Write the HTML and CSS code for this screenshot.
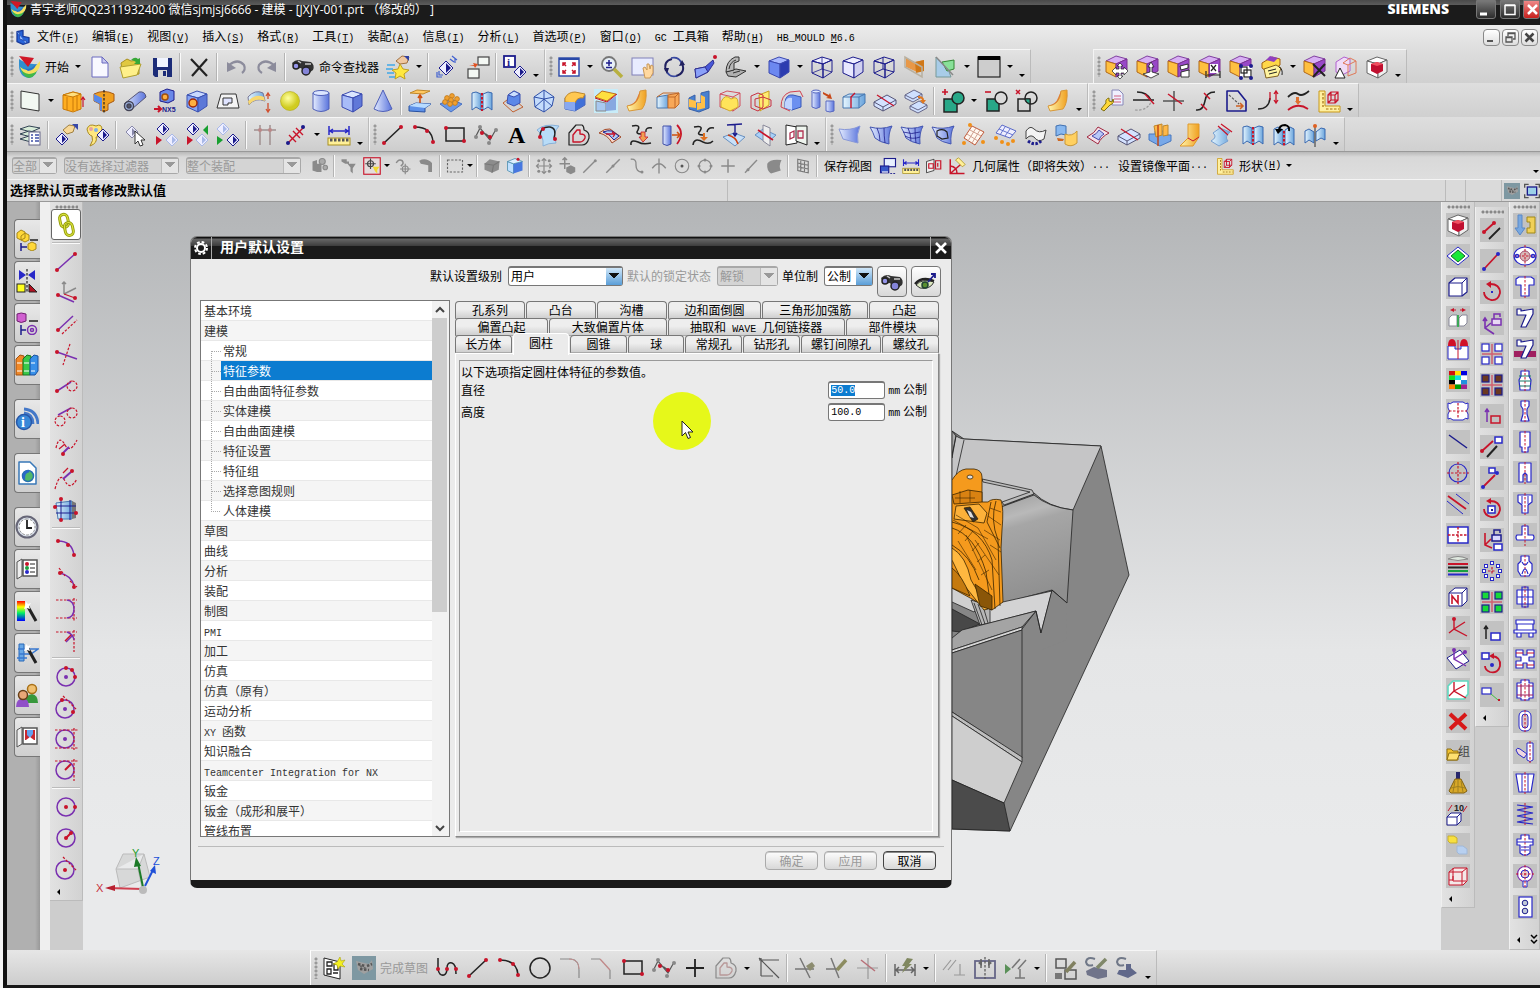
FILE: index.html
```html
<!DOCTYPE html>
<html lang="zh-CN">
<head>
    <meta charset="UTF-8">
    <meta name="viewport" content="width=device-width, initial-scale=1.0">
    <title>建模 - JXJY-001.prt</title>
    <link rel="stylesheet" href="styles.css">
</head>
<body>

<!-- Shared gradients for the icons -->
<svg class="defs" width="0" height="0">
    <defs>
        <linearGradient id="blue"><stop offset="0" stop-color="#e4ecff"/><stop offset="1" stop-color="#5a74dc"/></linearGradient>
        <linearGradient id="sky"><stop offset="0" stop-color="#e6f6ff"/><stop offset="1" stop-color="#6aa4dc"/></linearGradient>
        <linearGradient id="gold"><stop offset="0" stop-color="#fff7b0"/><stop offset="1" stop-color="#f0a020"/></linearGradient>
        <linearGradient id="gray" x2="0" y2="1"><stop offset="0" stop-color="#eee"/><stop offset="1" stop-color="#888"/></linearGradient>
        <linearGradient id="heat" x2="0" y2="1"><stop offset="0" stop-color="#f00"/><stop offset=".3" stop-color="#ff0"/><stop offset=".6" stop-color="#0e6"/><stop offset="1" stop-color="#00f"/></linearGradient>
        <linearGradient id="metal" x2=".2" y2="1"><stop offset="0" stop-color="#9d9d9d"/><stop offset=".22" stop-color="#b9b9b9"/><stop offset=".32" stop-color="#a6a6a6"/><stop offset="1" stop-color="#8f8f8f"/></linearGradient>
        <radialGradient id="ball" cx=".4" cy=".35"><stop offset="0" stop-color="#ffffa0"/><stop offset="1" stop-color="#d0cc20"/></radialGradient>
    </defs>
</svg>

<div class="app">

    <!-- Title bar -->
    <header class="titlebar">
        <svg class="logo" data-icon="start"></svg>
        <h1>青宇老师QQ2311932400 微信sjmjsj6666 - 建模 - [JXJY-001.prt （修改的） ]</h1>
        <span class="brand">SIEMENS</span>
        <button class="win" aria-label="minimize"><svg viewBox="0 0 20 19"><path d="M4 14h7" stroke="#fff" stroke-width="3"/></svg></button>
        <button class="win" aria-label="maximize"><svg viewBox="0 0 20 19"><path d="M5 5.500h10v9H5zM5 5h10" stroke="#fff" stroke-width="1.500" fill="none"/></svg></button>
        <button class="win close" aria-label="close"><svg viewBox="0 0 20 19"><path d="M5 5l9 9M14 5l-9 9" stroke="#fff" stroke-width="2.500"/></svg></button>
    </header>

    <!-- Menu -->
    <nav class="menubar">
        <span class="grip"></span>
        <svg class="menu-logo" data-icon="part"></svg>
        <a href="#">文件<i>(<u>F</u>)</i></a>
        <a href="#">编辑<i>(<u>E</u>)</i></a>
        <a href="#">视图<i>(<u>V</u>)</i></a>
        <a href="#">插入<i>(<u>S</u>)</i></a>
        <a href="#">格式<i>(<u>R</u>)</i></a>
        <a href="#">工具<i>(<u>T</u>)</i></a>
        <a href="#">装配<i>(<u>A</u>)</i></a>
        <a href="#">信息<i>(<u>I</u>)</i></a>
        <a href="#">分析<i>(<u>L</u>)</i></a>
        <a href="#">首选项<i>(<u>P</u>)</i></a>
        <a href="#">窗口<i>(<u>O</u>)</i></a>
        <a href="#"><i>GC </i>工具箱</a>
        <a href="#">帮助<i>(<u>H</u>)</i></a>
        <a href="#"><i>HB_MOULD <u>M</u>6.6</i></a>
        <span class="mdi">
            <button aria-label="minimize"><svg viewBox="0 0 17 17"><path d="M4 12h6" stroke="#555" stroke-width="2"/></svg></button>
            <button aria-label="restore"><svg viewBox="0 0 17 17"><path d="M4 8h6v5H4zM6 7V4h7v6h-2M4 8.500h6M6 4.500h7" stroke="#555" stroke-width="1.300" fill="none"/></svg></button>
            <button aria-label="close"><svg viewBox="0 0 17 17"><path d="M4.500 4.500l8 8M12.500 4.500l-8 8" stroke="#444" stroke-width="2.500"/></svg></button>
        </span>
    </nav>

    <!-- Toolbars -->
    <div class="toolrow">
        <div class="toolbar">
            <span class="grip"></span>
            <button class="tool text" data-icon="start">开始</button>
            <span class="tools" data-icons="v new open save | cut | undo redo |"></span>
            <button class="tool text" data-icon="binoc">命令查找器</button>
            <span class="tools" data-icons="wand v | orient layout | info ."></span>
        </div>
        <div class="toolbar">
            <span class="grip"></span>
            <span class="tools" data-icons="fit v zoom pan rotate persp clip v shaded v wire1 wire2 wire3 section section2 v window v ."></span>
        </div>
        <div class="toolbar apart">
            <span class="grip"></span>
            <span class="tools" data-icons="fmove fpull foffset fdim fpattern flabel v fdelete fghost redcube ."></span>
        </div>
    </div>
    <div class="toolrow">
        <div class="toolbar">
            <span class="grip"></span>
            <span class="tools" data-icons="plane v extrude revolve tube nx5 hole pad emboss sphere cyl block cone | raise studs sew draft gem blend chamfer flange join pocket bubble inter patch split trimbody slab slabs | unite v subtract intersect flange ."></span>
        </div>
        <div class="toolbar">
            <span class="grip"></span>
            <span class="tools" data-icons="wrench trimcurve trimcross scurve bound extend offsetcurve rulercube ."></span>
        </div>
    </div>
    <div class="toolrow">
        <div class="toolbar">
            <span class="grip"></span>
            <span class="tools" data-icons="layers | assign palette1 | pick add1 add2 add3 | gridlines measure v ruler ."></span>
        </div>
        <div class="toolbar">
            <span class="grip"></span>
            <span class="tools" data-icons="line arc rect spline lettera surfcurve offsetgray bridge joincurve wrapcyl joincurve2 project intersectsurf planes ."></span>
        </div>
        <div class="toolbar">
            <span class="grip"></span>
            <span class="tools" data-icons="surf1 surf2 surf3 surf4 netred netblue flagsheet extendsheet offsetsheet slab castle bootsheet foldsheet sew sewback sewpin ."></span>
        </div>
    </div>

    <!-- Selection bar -->
    <div class="selbar">
        <span class="combo off combo-s"><select aria-label="type" disabled><option>全部</option></select></span>
        <span class="combo off combo-m"><select aria-label="filter" disabled><option>没有选择过滤器</option></select></span>
        <span class="combo off combo-m"><select aria-label="scope" disabled><option>整个装配</option></select></span>
        <span class="tools" data-icons="gparts | gfilter snapbox v gturn ghook | marquee v | gcube bluecube | gmove gmove2 gline gseg gcurve gcross gcircle gquad gplus gslash gface | ggrid |"></span>
        <button class="plain">保存视图</button>
        <span class="tools" data-icons="saveview ruler planes2 angle"></span>
        <button class="plain">几何属性（即将失效）<i>...</i></button>
        <button class="plain">设置镜像平面<i>...</i></button>
        <button class="plain" data-icon="rulercube">形状<i>(<u>H</u>)</i></button>
        <span class="tools" data-icons="v"></span>
        <span class="corner"><span class="tools" data-icons="."></span></span>
    </div>

    <!-- Cue line -->
    <div class="status">
        <p class="cue">选择默认页或者修改默认值</p>
        <p class="msg"></p>
        <p class="cell"></p>
        <p class="cell cell-l"></p>
        <p class="cell icons"><svg data-icon="flag"></svg><svg data-icon="fullscreen"></svg></p>
    </div>

    <!-- Work area -->
    <main class="work">
        <aside class="resources">
            <button data-icon="assytree" aria-label="assembly"></button>
            <button data-icon="constraint" aria-label="constraints"></button>
            <button data-icon="parttree" aria-label="part"></button>
            <button data-icon="books" class="last" aria-label="library"></button>
            <button data-icon="web" class="last" aria-label="web"></button>
            <button data-icon="page" class="last" aria-label="page"></button>
            <button data-icon="clock" aria-label="history"></button>
            <button data-icon="materials" aria-label="materials"></button>
            <button data-icon="spectrum" aria-label="process"></button>
            <button data-icon="wizard" aria-label="wizard"></button>
            <button data-icon="people" aria-label="roles"></button>
            <button data-icon="scene" aria-label="scenes"></button>
        </aside>
        <aside class="dock left">
            <div class="toolcol">
                <span class="grip"></span>
                <span class="tools" data-icons="link | k1 k2 k3 k4 k5 k6 k7 k8 k9 | a1 a2 a3 a4 | c1 c2 c3 c4 | d1 d2 d3 <"></span>
            </div>
        </aside>

        <section class="graphics">
            <!-- Solid model -->
            <svg class="model" viewBox="952 425 180 410" width="180" height="410">
                <g stroke="#222" stroke-width=".8" stroke-linejoin="round">
                    <path fill="#868686" d="M952 431L964 439 1101 446 1129 575 1010 831 952 829z"/>
                    <path fill="#c5c5c6" d="M952 431Q956 438 964 439L1101 446 1073 510Q1048 507 1034 493L1004 506 952 520z"/>
                    <path fill="#aaa" d="M952 431L956 436 952 458z"/>
                    <path fill="none" d="M964 440L954 485M956 436L952 455"/>
                    <path fill="#bbb" d="M982 479L1032 490 1034 494 1004 505 1002 502 1030 492 983 482z"/>
                    <path fill="url(#metal)" d="M1001 507L1034 495Q1048 507 1073 510L1067 603 1052 590 1000 604z"/>
                    <path fill="#d3d3d4" d="M985 606L1052 591 1041 633 1036 611 990 623z"/>
                    <path fill="#868686" d="M1052 591L1067 603 1066 640 1041 650 1041 633z" stroke="none"/>
                    <path fill="none" d="M1067 603L1052 590 1041 633 1036 611 1022 629"/>
                    <path fill="#d0d0d0" d="M952 582L980 605 974 612 952 602z"/>
                    <path fill="#484848" d="M952 609L980 624 960 632 952 631z"/>
                    <path fill="#b6b6b6" d="M971 600L990 606 990 623 980 625z"/>
                    <path fill="none" d="M974 603l8 22M978 604l7 20M983 606l5 17"/>
                    <path fill="#a4a4a4" d="M952 638L962 630 1036 611 1022 627 952 650z"/>
                    <path fill="#d6d6d6" d="M952 650L1022 627V630L952 653z"/>
                    <path fill="#868686" d="M952 653L1022 630V758L952 712z"/>
                    <path fill="#bdbdbd" d="M952 712L1022 757V762L952 716z"/>
                    <path fill="#cecece" d="M952 716L1022 762 1004 803 952 780z"/>
                    <path fill="#4b4b4b" d="M952 780L1004 803 1010 831 952 829z"/>
                </g>
                <g stroke="#3a2400" stroke-width=".8" fill="#f59a1d">
                    <path d="M952 480Q958 470 966 469H974Q982 470 982 477V502H988Q992 498 1001 500Q1004 508 1002 530L1001 548 1003 602 992 610 952 588z"/>
                    <path d="M952 495L968 490 982 492V502L954 504z" fill="#d98212"/>
                    <path d="M956 506L979 504 987 513 984 523 954 519z" fill="#fcb13a"/>
                    <path d="M952 528Q975 535 986 572L991 609M952 522Q983 530 992 560L995 609M952 545Q970 555 979 580M996 501Q990 520 998 540L1000 606M991 502L987 522 1000 548" fill="none"/>
                    <path d="M952 548Q966 556 971 580L988 609 984 610 964 585 952 560z" fill="#ffb840"/>
                    <path d="M975 584L992 596V610L980 606z" fill="#8a5608"/>
                    <path d="M952 568Q962 575 970 596L952 588z" fill="#c47a10"/>
                    <path d="M958 534l8-9M965 541l8-10M972 551l7-8M977 562l8-7M981 575l8-5M955 498h20M960 491v12M970 490v12" fill="none" stroke-width=".6"/>
                    <path d="M953 520L988 539M956 515L978 528 996 560M990 508L1001 512M988 516L1001 525M984 530L1000 540M990 545L1001 552M975 540L999 575M966 535L992 590M958 541L976 570" fill="none" stroke-width=".6"/>
                    <path d="M964 508l6-1 8 12-5 3z" fill="#333"/>
                    <path d="M967 510l4 2 3 6-4-1z" fill="#ddd" stroke="none"/>
                    <ellipse cx="970" cy="477" rx="3" ry="2" fill="#ddd"/>
                </g>
            </svg>

            <!-- View triad -->
            <svg class="triad" viewBox="95 845 70 50" width="70" height="50">
                <path d="M123 853L144 853 150 876 120 887 116 868zM116 868H138L144 853M138 868L142 887" fill="#ccc" fill-opacity=".6" stroke="#bbb"/>
                <path d="M142 888L108 887" stroke="#d04050" stroke-width="2"/><path d="M105 887l10-3v6z" fill="#b82030"/>
                <path d="M143 886L138 862" stroke="#1c7a28" stroke-width="2"/><path d="M136 856l5 9-7 1z" fill="#1c7a28"/>
                <path d="M145 885L153 869" stroke="#2050d8" stroke-width="2"/><path d="M155 864l1 9-6-3z" fill="#2050d8"/>
                <circle cx="143" cy="889" r="4" fill="#bbb"/>
                <text x="96" y="891" fill="#c83040">X</text>
                <text x="132" y="856" fill="#28a030">Y</text>
                <text x="153" y="864" fill="#2050d8">Z</text>
            </svg>

            <!-- Customer defaults dialog -->
            <div class="dialog" role="dialog" aria-labelledby="dialog-title">
                <div class="dialog-title">
                    <svg viewBox="0 0 20 22" width="20" height="22"><circle cx="10" cy="11" r="6" fill="none" stroke="#fff" stroke-width="2" stroke-dasharray="2.700 2"/><circle cx="10" cy="11" r="4" fill="none" stroke="#fff" stroke-width="2"/></svg>
                    <h2 id="dialog-title">用户默认设置</h2>
                    <button aria-label="close"><svg viewBox="0 0 20 22" width="20" height="22"><path d="M5 6l10 10M15 6L5 16" stroke="#fff" stroke-width="2.600"/></svg></button>
                </div>

                <div class="levels">
                    <div class="pair">
                        <label for="level">默认设置级别</label>
                        <span class="combo combo-m"><select id="level"><option>用户</option></select></span>
                    </div>
                    <div class="pair off">
                        <label for="lock">默认的锁定状态</label>
                        <span class="combo off combo-s"><select id="lock" disabled><option>解锁</option></select></span>
                    </div>
                    <div class="pair">
                        <label for="unit">单位制</label>
                        <span class="combo combo-xs"><select id="unit"><option>公制</option></select></span>
                    </div>
                    <button class="square" data-icon="binoc" aria-label="find"></button>
                    <button class="square" data-icon="eye" aria-label="manage"></button>
                </div>

                <div class="content">
                    <div class="tree">
                        <ul>
                            <li>基本环境</li>
                            <li>建模</li>
                            <li class="child">常规</li>
                            <li class="child selected"><span>特征参数</span></li>
                            <li class="child">自由曲面特征参数</li>
                            <li class="child">实体建模</li>
                            <li class="child">自由曲面建模</li>
                            <li class="child">特征设置</li>
                            <li class="child">特征组</li>
                            <li class="child">选择意图规则</li>
                            <li class="child end">人体建模</li>
                            <li>草图</li>
                            <li>曲线</li>
                            <li>分析</li>
                            <li>装配</li>
                            <li>制图</li>
                            <li><i>PMI</i></li>
                            <li>加工</li>
                            <li>仿真</li>
                            <li>仿真（原有）</li>
                            <li>运动分析</li>
                            <li><i>XY </i>函数</li>
                            <li>知识融合</li>
                            <li><i>Teamcenter Integration for NX</i></li>
                            <li>钣金</li>
                            <li>钣金（成形和展平）</li>
                            <li>管线布置</li>
                        </ul>
                        <div class="scroll">
                            <svg viewBox="0 0 16 17"><path d="M4 11l4-4 4 4" fill="none" stroke="#444" stroke-width="2"/></svg>
                            <div class="thumb"></div>
                            <svg viewBox="0 0 16 17"><path d="M4 7l4 4 4-4" fill="none" stroke="#444" stroke-width="2"/></svg>
                        </div>
                    </div>

                    <div class="pages">
                        <div class="tabs">
                            <button><span>孔系列</span></button><button><span>凸台</span></button><button><span>沟槽</span></button><button><span>边和面倒圆</span></button><button><span>三角形加强筋</span></button><button><span>凸起</span></button>
                        </div>
                        <div class="tabs">
                            <button><span>偏置凸起</span></button><button><span>大致偏置片体</span></button><button><span>抽取和<i> WAVE </i>几何链接器</span></button><button><span>部件模块</span></button>
                        </div>
                        <div class="tabs">
                            <button><span>长方体</span></button><button class="active"><span>圆柱</span></button><button><span>圆锥</span></button><button><span>球</span></button><button><span>常规孔</span></button><button><span>钻形孔</span></button><button><span>螺钉间隙孔</span></button><button><span>螺纹孔</span></button>
                        </div>
                        <div class="panel">
                            <div class="panel-inner">
                                <p>以下选项指定圆柱体特征的参数值。</p>
                                <div class="field">
                                    <label for="diameter">直径</label>
                                    <input id="diameter" type="text" value="50.0">
                                    <span><i>mm</i> 公制</span>
                                </div>
                                <div class="field">
                                    <label for="height">高度</label>
                                    <input id="height" type="text" value="100.0">
                                    <span><i>mm</i> 公制</span>
                                </div>
                            </div>
                        </div>
                    </div>
                </div>

                <div class="actions">
                    <button disabled>确定</button>
                    <button disabled>应用</button>
                    <button>取消</button>
                </div>
            </div>

            <!-- Click highlight and pointer -->
            <div class="spot">
                <svg viewBox="0 0 14 20" width="14" height="20"><path d="M1 1v15l3.500-3.500L7 18.500l2.500-1L7 12h5z" fill="#fff" stroke="#222"/></svg>
            </div>
        </section>

        <aside class="dock right">
            <div class="toolcol tiles">
                <span class="grip"></span>
                <span class="tools" data-icons="redcube diamond wbox splitbox mold swatches sheet bline target lines3 rectcross rainbow nbox axis axisplane axisbox bigx folder broom ten blobs redbox <"></span>
            </div>
        </aside>
        <aside class="dock right lower">
            <div class="toolcol tiles">
                <span class="grip"></span>
                <span class="tools" data-icons="parl seg rotr axlock four fourb moverect parl2 seg2 rot2 axlock2 ringsq fourg moverect2 rot3 linkr <"></span>
            </div>
        </aside>
        <aside class="dock right">
            <div class="toolcol tiles full">
                <span class="grip"></span>
                <span class="tools" data-icons="screw locring tee seven seven2 m1 m2 m3 m4 m5 m6 m7 m8 m9 m10 m11 m12 m13 m14 m15 m16 m17 m18"></span>
                <span class="more"><span class="tools" data-icons="< »"></span></span>
            </div>
        </aside>
    </main>

    <!-- Sketch toolbar -->
    <footer class="sketchbar">
        <div class="toolbar">
            <span class="grip"></span>
            <span class="tools" data-icons="sketch"></span>
            <button class="tool text" data-icon="flag" disabled>完成草图</button>
            <span class="tools" data-icons="profile line arc3 circle filletg chamferg rect spline plus offsetg v quickg | ext1 ext2 ext3 | dimg v | perpg consg playg v | edit1 edit2 edit3 ."></span>
        </div>
    </footer>
</div>

<script src="icons.js"></script>
</body>
</html>
```

FILE: styles.css
```css
* {
    box-sizing: border-box;
}

body {
    margin: 0;
    padding-left: 3px;
    background: #f4f4f4;
    color: #000;
    font-family: "Noto Sans CJK SC", sans-serif;
    font-size: 12px;
    line-height: 16px;
}

h1, h2, p, ul {
    margin: 0;
    padding: 0;
    font-size: 12px;
}

/* half-width latin text */
i {
    font-family: "Liberation Mono", monospace;
    font-size: 10px;
    font-style: normal;
    white-space: pre;
}

button, input, select {
    margin: 0;
    padding: 0;
    border: none;
    background: none;
    color: inherit;
    font: inherit;
}

.defs {
    position: absolute;
}

.app {
    display: flex;
    flex-direction: column;
    height: 100vh;
    border-left: 4px solid #111;
    border-bottom: 3px solid #181818;
    background: #d6d6d6;
    overflow: hidden;
}

/* Title bar */
.titlebar {
    display: flex;
    align-items: flex-start;
    height: 25px;
    flex-shrink: 0;
    background: linear-gradient(#4a4a4a, #5c5c5c 5px, #1b1b1b 5px);
    color: #fff;
}

.titlebar .logo {
    width: 18px;
    height: 18px;
    margin: 0 3px 0 2px;
}

.titlebar h1 {
    flex: 1;
    font-family: "Open Sans", "Noto Sans CJK SC", sans-serif;
    font-weight: 400;
    line-height: 19px;
    white-space: pre;
}

.brand {
    margin-right: 23px;
    font-family: "Open Sans", sans-serif;
    font-weight: 800;
    font-size: 14px;
    line-height: 18px;
}

.win {
    width: 20px;
    height: 19px;
    margin-left: 4px;
    border: 1px solid #777;
    border-radius: 0 0 3px 3px;
    background: linear-gradient(#777, #2c2c2c);
}

.win.close {
    width: 17px;
    margin-left: 3px;
    background: linear-gradient(#e88, #c8201c);
    overflow: hidden;
}

.win svg {
    display: block;
    width: 20px;
    height: 19px;
    margin: -1px;
}

/* Menu bar */
.menubar {
    display: flex;
    align-items: center;
    height: 24px;
    flex-shrink: 0;
    background: linear-gradient(#ececec, #dedede);
}

.menubar a {
    margin-right: 13px;
    color: #000;
    text-decoration: none;
    white-space: nowrap;
}

.menu-logo {
    width: 16px;
    height: 16px;
    margin: 0 6px 0 1px;
}

.mdi {
    display: flex;
    gap: 2px;
    margin-left: auto;
    margin-right: 2px;
}

.mdi button {
    width: 17px;
    height: 17px;
    border: 1px solid #888;
    border-radius: 4px;
    background: linear-gradient(#fff, #ddd);
}

.mdi svg {
    display: block;
    margin: -1px;
    width: 17px;
}

/* Toolbars */
.grip {
    width: 7px;
    align-self: stretch;
    margin: 6px 0;
    flex-shrink: 0;
    background: radial-gradient(circle, #999 1px, transparent 2px) 3px 0 / 4px 4px repeat-y;
}

.toolrow {
    display: flex;
    height: 34px;
    flex-shrink: 0;
    background: linear-gradient(#dedede, #d0d0d0);
}

.toolbar {
    display: flex;
    align-items: center;
    padding-right: 2px;
    border-top: 1px solid #f6f6f6;
    border-right: 1px solid #bbb;
    background: linear-gradient(#e3e3e3, #cdcdcd);
}

.toolbar + .toolbar {
    border-left: 1px solid #f4f4f4;
}

.apart {
    margin-left: 62px;
}

.tools {
    display: contents;
}

.tool {
    display: flex;
    align-items: center;
    justify-content: center;
    width: 31px;
    height: 31px;
    flex-shrink: 0;
}

.tool svg {
    width: 24px;
    height: 24px;
    flex-shrink: 0;
    overflow: visible;
}

.tool.text {
    width: auto;
    gap: 4px;
    padding: 0 3px;
}

.tool:disabled {
    color: #999;
}

.sep {
    width: 2px;
    height: 28px;
    margin: 0 2px;
    flex-shrink: 0;
    border-left: 1px solid #b4b4b4;
    background: #fafafa;
}

.caret {
    display: flex;
    justify-content: center;
    width: 12px;
    flex-shrink: 0;
}

.caret::after {
    content: "";
    border: 3px solid transparent;
    border-top-color: #000;
    border-bottom: none;
}

.caret.low {
    align-self: flex-end;
    padding-bottom: 6px;
}

/* Selection bar */
.selbar {
    display: flex;
    align-items: center;
    height: 28px;
    flex-shrink: 0;
    padding-left: 5px;
    border-top: 1px solid #999;
    background: linear-gradient(#b8b8b8, #d8d8d8 5px, #dedede);
}

.selbar .combo {
    margin-right: 7px;
}

.selbar .tool {
    width: 23px;
    height: 24px;
}

.selbar .tool svg, .plain svg {
    width: 18px;
    height: 18px;
}

.selbar .sep {
    height: 22px;
}

.selbar .caret {
    width: 8px;
}

.plain {
    display: flex;
    align-items: center;
    margin: 0 4px;
    white-space: nowrap;
}

.plain svg {
    margin-right: 5px;
}

.corner {
    display: flex;
    margin-left: auto;
    align-self: flex-end;
}

/* Drop-downs */
.combo {
    position: relative;
    display: block;
    height: 20px;
    border: 1px solid #777;
    border-top-width: 2px;
    border-radius: 3px;
    background: #fff;
}

.combo select {
    display: block;
    width: 100%;
    height: 16px;
    padding-left: 2px;
    appearance: none;
    line-height: 16px;
    opacity: 1;
}

.combo::after {
    content: "";
    position: absolute;
    top: 0;
    right: 0;
    bottom: 0;
    width: 16px;
    background:
        conic-gradient(from -45deg at 50% 80%, #111 90deg, transparent 0) center 5px / 12px 7px no-repeat,
        linear-gradient(#cfe6f8, #5a9ed8);
    pointer-events: none;
}

.combo.off {
    border-color: #a8a8a8;
    background: #d4d4d4;
    color: #999;
}

.combo.off::after {
    background:
        conic-gradient(from -45deg at 50% 80%, #999 90deg, transparent 0) center 5px / 12px 7px no-repeat,
        #e4e4e4;
    border-left: 1px solid #bbb;
}

.combo-xs { width: 49px; }
.combo-s { width: 61px; }
.combo-m { width: 115px; }

.selbar .combo { height: 17px; }
.selbar .combo select { height: 14px; line-height: 14px; padding: 0; }
.selbar .combo-s { width: 45px; }
.selbar .combo::after { background-position: center 3px, 0 0; }

/* Cue line */
.status {
    display: flex;
    height: 23px;
    flex-shrink: 0;
    border-top: 1px solid #f4f4f4;
    border-bottom: 1px solid #999;
    background: #dadada;
}

.status p {
    border-right: 1px solid #bbb;
    line-height: 20px;
}

.status .cue {
    flex: 1;
    padding-left: 3px;
    font-size: 13px;
    font-weight: 700;
}

.msg {
    flex: 1;
}

.cell { width: 20px; }
.cell-l { width: 36px; }

.status .icons {
    display: flex;
    align-items: center;
    justify-content: space-between;
    width: 38px;
    padding-left: 2px;
    border: none;
}

.icons svg {
    width: 16px;
    height: 16px;
}

/* Work area */
.work {
    display: flex;
    flex: 1;
    min-height: 0;
}

.resources {
    display: flex;
    flex-direction: column;
    align-items: flex-end;
    gap: 2px;
    width: 43px;
    flex-shrink: 0;
    padding-top: 17px;
    border-right: 10px solid #efefef;
    background: linear-gradient(90deg, #b0b0b0 85%, #999);
}

.resources button {
    width: 26px;
    height: 40px;
    border: 1px solid #777;
    border-right: none;
    border-radius: 4px 0 0 4px;
    background: linear-gradient(#e8e8e8, #cfcfcf);
}

.resources .last {
    margin-bottom: 12px;
}

.resources svg {
    display: block;
    width: 24px;
    height: 24px;
}

.dock {
    flex-shrink: 0;
    width: 34px;
    background: #cdcdcd;
}

.dock.left {
    width: 33px;
}

.dock.right:last-child {
    width: 31px;
}

.dock.lower {
    padding-top: 5px;
}

.toolcol {
    display: flex;
    flex-direction: column;
    align-items: center;
    border: 1px solid #bbb;
    border-width: 0 1px 1px 0;
    background: linear-gradient(90deg, #e2e2e2, #d2d2d2);
}

.tiles {
    border-left: 1px solid #f0f0f0;
}

.toolcol .grip {
    width: 23px;
    height: 7px;
    align-self: center;
    margin: 0;
    background: radial-gradient(circle, #888 1px, transparent 2px) 0 3px / 4px 4px repeat-x;
}

.toolcol .sep {
    width: 28px;
    height: 2px;
    margin: 2px 0;
    border: none;
    border-top: 1px solid #bbb;
}

.tiles .tool svg {
    background: #c2c2c2;
}

.tool.on {
    width: 30px;
    border: 1px solid #666;
    border-radius: 3px;
    background: #fff;
}

.back {
    align-self: flex-start;
    height: 14px;
    width: 12px;
    margin: 1px 0;
}

.back::after {
    content: "";
    display: block;
    width: 3px;
    margin-left: 4px;
    border: 3px solid transparent;
    border-right-color: #000;
    border-left: none;
}

.full {
    height: 100%;
}

.more {
    display: flex;
    align-self: stretch;
    justify-content: space-between;
    margin-top: auto;
}

.more svg {
    width: 10px;
    height: 14px;
}

/* Graphics window */
.graphics {
    position: relative;
    flex: 1;
    background: linear-gradient(#b3b5b7, #e5e6e7 60%, #e9eaeb 85%);
    overflow: hidden;
}

.model {
    position: absolute;
    left: 869px;
    top: 223px;
}

.triad {
    position: absolute;
    left: 12px;
    bottom: 54px;
    font-family: "Liberation Sans", sans-serif;
    font-size: 11px;
}

.spot {
    position: absolute;
    left: 570px;
    top: 190px;
    width: 58px;
    height: 58px;
    padding: 28px 0 0 28px;
    border-radius: 50%;
    background: #e6f81a;
}

/* Dialog */
.dialog {
    position: absolute;
    left: 107px;
    top: 34px;
    display: flex;
    flex-direction: column;
    width: 762px;
    height: 652px;
    border: 1px solid #777;
    border-bottom: 8px solid #1a1a1a;
    border-radius: 7px;
    background: #ebebeb;
    overflow: hidden;
}

.dialog-title {
    display: flex;
    height: 22px;
    flex-shrink: 0;
    background: linear-gradient(#111 1px, #666 2px, #3c3c3c 9px, #1a1a1a 9px);
    color: #fff;
}

.dialog-title h2 {
    flex: 1;
    padding-left: 8px;
    border-left: 1px solid #aaa;
    font-size: 14px;
    line-height: 18px;
}

.dialog-title button {
    width: 21px;
    border-left: 1px solid #aaa;
}

.levels {
    display: flex;
    justify-content: flex-end;
    gap: 4px;
    height: 41px;
    flex-shrink: 0;
    padding: 7px 10px 0 0;
}

.pair {
    display: flex;
    gap: 6px;
    height: 20px;
    line-height: 20px;
}

.pair.off {
    color: #999;
}

.square {
    width: 30px;
    height: 31px;
    border: 1px solid #777;
    border-radius: 4px;
    background: linear-gradient(#fff, #d8d8d8);
}

.square svg {
    display: block;
    width: 24px;
    height: 24px;
    margin: auto;
}

.content {
    display: flex;
    flex: 1;
    gap: 5px;
    min-height: 0;
    padding: 0 12px 0 9px;
}

/* Tree */
.tree {
    display: flex;
    width: 250px;
    border: 1px solid #777;
    background: #fff;
    overflow: hidden;
}

.tree ul {
    flex: 1;
    list-style: none;
}

.tree li {
    position: relative;
    height: 20px;
    padding-left: 3px;
    border-bottom: 1px solid #e8e8e8;
    color: #333;
    line-height: 20px;
}

.tree li:nth-child(even) {
    background: #f5f5f5;
}

.tree .child {
    padding-left: 22px;
}

.tree .child::before {
    content: "";
    position: absolute;
    z-index: 1;
    left: 10px;
    top: 10px;
    width: 9px;
    height: 20px;
    border: 1px dotted #aaa;
    border-width: 1px 0 0 1px;
}

.tree .end::before {
    border-left: none;
}

.tree .selected span {
    display: block;
    height: 19px;
    margin-left: -2px;
    padding-left: 2px;
    background: #0c7cd0;
    color: #fff;
}

.scroll {
    display: flex;
    flex-direction: column;
    width: 17px;
    background: #f2f2f2;
}

.scroll svg {
    width: 16px;
    height: 17px;
}

.thumb {
    width: 15px;
    height: 55%;
    margin-bottom: auto;
    background: #cdcdcd;
}

/* Tabs */
.pages {
    display: flex;
    flex: 1;
    flex-direction: column;
    padding-top: 1px;
}

.tabs {
    display: flex;
    gap: 1px;
    height: 17px;
    flex-shrink: 0;
}

.tabs button {
    flex: 1 1 auto;
    height: 18px;
    border: 1px solid #777;
    border-bottom-color: #aaa;
    border-radius: 4px 4px 0 0;
    background: linear-gradient(#eee 45%, #cfcfcf);
    line-height: 16px;
    white-space: nowrap;
}

.tabs span {
    display: inline-block;
    min-width: 36px;
}

.tabs .active {
    z-index: 1;
    height: 22px;
    margin-top: -2px;
    padding-bottom: 3px;
    border-color: #fff;
    border-bottom: none;
    background: #ebebeb;
}

.panel {
    flex: 1;
    margin-top: 1px;
    padding: 6px 5px 4px 3px;
    border: 1px solid #888;
    border-top-color: #fff;
    border-left-color: #fff;
    box-shadow: 1px 1px 1px #aaa;
}

.panel-inner {
    height: 100%;
    padding: 4px 5px 0 1px;
    border: 1px solid #999;
    border-right-color: #fff;
    border-bottom-color: #fff;
}

.panel-inner p {
    line-height: 14px;
}

.field {
    display: flex;
    align-items: center;
    height: 22px;
}

.field label {
    flex: 1;
}

.field input {
    width: 57px;
    height: 18px;
    margin-right: 3px;
    padding-left: 2px;
    border: 1px solid #777;
    border-top-width: 2px;
    border-radius: 3px;
    background: #fff;
    font-family: "Liberation Mono", monospace;
    font-size: 10px;
}

.field input::selection {
    background: #0c7cd0;
    color: #fff;
}

.field input:focus {
    outline: none;
}

.actions {
    display: flex;
    justify-content: flex-end;
    gap: 6px;
    height: 34px;
    margin: 9px 7px 0;
    padding: 4px 8px 0;
    border-top: 1px solid #bbb;
}

.actions button {
    width: 53px;
    height: 19px;
    border: 1px solid #444;
    border-radius: 4px;
    background: linear-gradient(#fdfdfd, #d8d8d8);
    box-shadow: inset 0 1px #888;
    line-height: 17px;
}

.actions button:disabled {
    border-color: #aaa;
    box-shadow: inset 0 1px #ccc;
    color: #999;
}

/* Sketch toolbar */
.sketchbar {
    display: flex;
    height: 35px;
    flex-shrink: 0;
    padding-left: 303px;
    background: linear-gradient(#e6e6e6, #cdcdcd);
}

.sketchbar .toolbar {
    border-left: 1px solid #fff;
}
```

FILE: icons.js
```js
// Drawing helpers, every icon sits in a 24 x 24 box
const R = '#c8142a', N = '#1c1c8c', B = '#2828c8', K = '#222', G = '#8a8a8a', O = '#f09018', V = '#7a30b0';

const ln = (d, c = K, w = 1.5) => `<path d="${d}" fill="none" stroke="${c}" stroke-width="${w}"/>`;
const fl = (d, f, c = 'none', w = 1) => `<path d="${d}" fill="${f}" stroke="${c}" stroke-width="${w}" stroke-linejoin="round"/>`;
const ds = (d, c = R, w = 1.2) => `<path d="${d}" fill="none" stroke="${c}" stroke-width="${w}" stroke-dasharray="2.5 1.5"/>`;
const ci = (x, y, r, c = K, f = 'none', w = 1.5) => `<circle cx="${x}" cy="${y}" r="${r}" stroke="${c}" fill="${f}" stroke-width="${w}"/>`;
const bx = (x, y, w, h, c = K, f = 'none', s = 1.5) => `<rect x="${x}" y="${y}" width="${w}" height="${h}" stroke="${c}" fill="${f}" stroke-width="${s}"/>`;
const dots = (c, ...pts) => pts.map(p => `<circle cx="${p.split(',')[0]}" cy="${p.split(',')[1]}" r="2" fill="${c}"/>`).join('');
const tx = (x, y, s, t, c = K, f = 'Liberation Sans') => `<text x="${x}" y="${y}" font-size="${s}" font-weight="bold" font-family="${f}" fill="${c}">${t}</text>`;
const cube = (top, left, right, c = N) => fl('M2 6L12 2 22 5 13 9z', top, c) + fl('M2 6L13 9V23L2 18z', left, c) + fl('M13 9L22 5V17L13 23z', right, c);
const gem = (x, y, f = N, s = 6) => fl(`M${x - s} ${y}L${x} ${y - s} ${x + s} ${y} ${x} ${y + s}z`, '#eef', f) + fl(`M${x} ${y - s + 2}L${x + s - 2} ${y} ${x} ${y + s - 2}z`, f);
const sheet = (f, c = '#4456b0') => fl('M1 4Q12 7 23 3Q19 10 20 21Q10 19 6 15Q4 9 1 4z', f, c);
const face = fl('M1 6L11 1 22 4 11 9z', '#d8b0f4', '#8040a0') + fl('M1 6L11 9V22L1 17z', '#ffc040', '#b06818') + fl('M11 9L22 4V16L11 22z', '#9848c8', '#7a3090');
const part = d => fl(d, '#fff', B, 1.2) + ds('M12 1V23', R, 1);
const quad = (f, c, s) => [[2, 2], [15, 2], [2, 15], [15, 15]].map(p => bx(p[0], p[1], 7, 7, c, f, s)).join('') + ln('M12 2V22M2 12H22', '#d06070');
const slabAt = (x, y) => fl(`M${x} ${y + 5}l9-5 8 4v3l-9 5-8-4z`, '#cfe0ff', '#668') + ln(`M${x} ${y + 5}l8 4 9-5`, '#668', 1);

const icons = {
    // application
    start: fl('M2 4Q10 10 22 9Q20 22 12 23Q2 22 2 10z', '#2f8fd0') + fl('M4 12Q10 21 21 10Q20 22 12 23Q4 21 4 12z', '#42b848') + fl('M3 12Q12 20 23 6Q24 18 12 19Q5 18 3 12z', '#f4e060') + fl('M6 12Q12 17 19 9Q18 15 11 16z', '#2a70c8') + fl('M2 1L17 3 11 12z', '#d01828'),
    part: fl('M3 4L12 2V11L21 13V20L12 23 3 19z', '#2864d8', '#1a3c9c', 2) + fl('M3 4L7 6V15L17 18V22', '#a8c8ff', '#1a3c9c'),
    new: fl('M4 2H14L20 8V22H4z', '#f8f8ff', '#6a6ac0') + fl('M14 2V8H20z', '#c8c8f0', '#6a6ac0'),
    open: fl('M2 8L8 4 12 6 20 5V19L4 22z', '#e0c840', '#a89020') + fl('M1 12L22 9 18 20 4 23z', '#fff08a', '#b0a030') + fl('M12 5Q16 1 19 4L21 3V9H15L17 7Q14 5 12 5z', '#38a838'),
    save: fl('M3 3H22V22H5L3 20z', '#1c2c78') + bx(7, 3, 11, 9, 'none', '#f0f4ff') + bx(8, 15, 9, 7, 'none', '#d8d8d8') + bx(13, 16, 3, 5, 'none', '#1c2c78'),
    cut: ln('M4 4L20 21M20 4L5 21', K, 2.2),
    undo: ln('M5 10Q14 3 20 10Q22 15 18 18', '#8c8c9c', 2.2) + fl('M3 7V17L12 13z', '#8c8c9c'),
    redo: ln('M19 10Q10 3 4 10Q2 15 7 18', '#8c8c9c', 2.2) + fl('M21 7V17L12 13z', '#8c8c9c'),
    binoc: fl('M1 8Q6 3 11 6L20 7Q24 10 22 15L15 20 10 13 4 14z', '#333') + ci(5, 11, 3, '#222', '#9494e8') + ci(15, 16, 4, '#222', '#8484d8') + ln('M7 6L10 8M14 9L20 9', '#ccc'),
    wand: fl('M10 6L16 1 23 2 21 8 14 9z', '#f0c8a0', '#a07040') + fl('M18 1h5v5z', '#3040a0') + fl('M14 9l3 5 6 1-5 4 1 5-5-3-5 3 1-6-4-3 6-1z', '#ffe840', '#c0a020') + ln('M1 10H9M0 14H7M1 18H8M3 22H9', '#40a8e8'),
    orient: gem(11, 13, N, 7) + ln('M15 4l4 3M17 1l5 4M20 8V3M2 17v5h5M4 16v4h4', '#4060d0', 1.2),
    layout: bx(12, 2, 11, 8, '#444', '#f4f8f4', 1.2) + bx(2, 14, 11, 9, '#444', '#f4f8f4', 1.2) + fl('M3 11l5-1-1-2 5 1-3 4-1-2z', '#e05020'),
    info: bx(1, 1, 11, 11, N, '#fff', 1.8) + tx(4, 11, 11, 'i', N, 'Liberation Serif') + gem(17, 17),
    fit: bx(2, 3, 20, 18, '#2848a8', '#fff', 1.4) + fl('M2 3H22V5H2z', '#2848a8') + ln('M6 8l3 3M6 11V8h3M18 8l-3 3M18 11V8h-3M6 18l3-3M6 15v3h3M18 18l-3-3M18 15v3h-3', R),
    zoom: ci(9, 9, 7, '#777', '#e8f0f8', 1.8) + ln('M14 14L22 22', '#b8b040', 3.5) + ln('M9 5V11M6 8H12M6 12.500H12', N),
    pan: bx(1, 3, 21, 17, '#8080b8', '#e8ecff', 1) + fl('M12 13l2-1 2 3V9l2 0 1 5 1-4 2 1 0 7-3 5h-5z', '#ffd8a0', '#c89858'),
    rotate: ln('M4 16Q1 6 10 4M20 8Q24 18 14 21', '#202060', 2) + ln('M9 3Q18 1 20 10M15 21Q6 23 4 14', '#3848a0', 1.6) + fl('M2 13l5 0-2 6zM17 11l6-1-3-5z', '#202060'),
    persp: fl('M2 14L12 12 20 5 21 8 15 17 3 23z', '#4858d8', '#303090') + fl('M2 14L12 12 15 17 3 23z', '#8aa0f8', '#303090') + dots(R, '22,2'),
    clip: fl('M2 17L12 14 22 16 12 22 4 21z', '#b0b0b0', '#333') + fl('M2 17Q2 6 11 2L15 2V6L10 8V15z', '#b8b8b8', '#333') + fl('M5 14Q6 7 12 5M9 18l7-2', 'none', '#333'),
    shaded: cube('#a8b8ff', '#6c88f0', '#2c3cb0', '#3a48b0'),
    wire1: cube('#eef', 'none', 'none') + ln('M2 18L12 14 22 17M12 14V2', N, .8),
    wire2: cube('#eef', '#e8e8ff', '#d0d0f0'),
    wire3: cube('none', 'none', 'none') + ln('M2 18L11 14 22 17M11 14V2', N, 1),
    section: fl('M3 3L12 7 21 5V16L14 17 3 12z', '#e89848') + fl('M12 7L21 5V16L13 18z', '#d07818') + ln('M2 2V12L19 22V12z', '#b8b0a0'),
    section2: fl('M2 2V22L17 22 14 14z', '#a8cce8', '#799') + fl('M8 7L20 5 20 14 13 16z', '#88e098', '#383') + ln('M2 2L19 20', '#888'),
    window: bx(1, 2, 22, 20, K, '#cdcdcd', 1.2) + fl('M1 1H23V5H1z', '#000'),
    fmove: face + fl('M15 8l3 3h-2v3h3v-2l4 4-4 4v-2h-3v3h2l-3 3-3-3h2v-3h-3v2l-4-4 4-4v2h3v-3h-2z', '#fff', K, .7),
    fpull: face + fl('M15 7l3 5h-2v5l7 2-8 4-8-4 7-2v-5h-2z', '#fff', K, .8),
    foffset: face + fl('M13 11l8-2v4l-7 2zM14 17l8-2v7h-8z', '#fff', K, .9),
    fdim: face + bx(12, 9, 8, 9, 'none', '#fff') + ln('M13 10l5 6M18 10l-5 6M8 16v7M22 16v7M9 20h13', K, 1.2),
    fpattern: face + bx(11, 11, 12, 12, 'none', '#fff') + bx(12, 12, 6, 6, K, 'none', 1.2) + bx(15, 15, 7, 7, K, 'none', 1.2) + dots(N, '12,11', '22,11', '12,23', '22,23'),
    flabel: fl('M2 8L12 2 20 4 20 10 9 18 2 13z', '#ffd848', '#a06010') + fl('M10 1L18 3 14 7 6 5z', '#9040c0') + fl('M4 14L16 10 21 13 18 21 6 23z', '#fff4a0', '#806020') + ln('M8 16l8-2M9 19l8-2M19 12q4 2 3 8', K, 1),
    fdelete: face + ln('M10 9L22 21M22 9L10 22', K, 2),
    fghost: fl('M2 7L10 2 16 4V16L8 20 2 17z', '#f0dcf8', '#b060d0') + fl('M9 8L16 3 22 6V18L14 21V10L9 8M14 10L22 6', 'none', '#e07858') + fl('M6 13L11 23H1z', '#fff', K),
    redcube: cube('#fff', '#fff', '#eee', '#666') + fl('M6 9L12 7 18 9V16L12 19 6 16z', '#c01030') + fl('M6 9L12 7 18 9 12 11z', '#f05060'),

    // features
    plane: fl('M3 2L21 5V22L3 19z', '#f2f8f2', '#333'),
    extrude: fl('M2 6L12 3 20 5V20L12 23 2 20z', '#ffae20', '#c87808') + fl('M2 6L12 3 20 5 12 8z', '#ffe080', '#c87808') + ln('M6 8V21M12 8V22M16 7V21', '#c87808', 1) + ln('M22 18V9M20 11l2-3 2 3', R, 1.2),
    revolve: fl('M2 5Q12 0 22 5V12L16 15V21Q12 24 8 21V15L2 12z', '#f0a020', '#a85810') + fl('M2 5L10 9V22L8 21V15L2 12z', '#5888e8') + ds('M12 1V24', K),
    tube: fl('M1 15L16 3Q22 2 23 8L9 20z', 'url(#blue)', '#557') + ci(6, 17, 4.500, '#445', '#a8c0f0') + ci(6, 17, 2, '#445', '#556'),
    nx5: fl('M6 3L13 0 20 2V11L14 14 6 12z', '#6a88e8', N) + ci(11, 8, 3, '#a05010', '#ffb040') + tx(8, 23, 7, 'NX5', N) + ln('M0 20H7M4 17l3 3-3 3', R, 2),
    hole: cube('#c8d8ff', '#86a4f4', '#5c78d8', '#3a50b0') + ci(8, 14, 4, '#a02808', '#ffb040'),
    pad: fl('M5 5H20L23 19H1z', '#f4f4f4', '#333') + fl('M7 13V9H16V14H12V16H7z', '#e0e4ff', '#333'),
    emboss: fl('M1 8Q8 0 16 4L18 12Q8 8 2 16z', 'url(#sky)', '#779') + fl('M1 12Q9 4 17 8L18 12Q8 8 2 16z', '#f8d870') + ln('M21 5V10M21 14V22M19 7l2-3 2 3M19 20l2 3 2-3', '#d05030', 1.3),
    sphere: ci(12, 12, 9.500, '#b0a810', 'url(#ball)', .6),
    cyl: fl('M4 4V20Q12 25 20 20V4z', 'url(#blue)', '#5060b8') + `<ellipse cx="12" cy="4" rx="8" ry="2.500" fill="#dce6ff" stroke="#5060b8"/>`,
    block: cube('#dce6ff', '#a8bcf8', '#6078d8', '#3a4ab0'),
    cone: fl('M12 1L21 20Q12 25 3 20z', 'url(#blue)', '#5060b8'),
    raise: fl('M2 4L9 1 22 2 15 5z', '#ffc860', '#c08828') + ln('M12 15V7M10 9l2-3 2 3', '#d05010', 1.6) + fl('M1 17L8 14 23 15 17 19V23L1 22z', '#5c90e8', '#2850a0') + fl('M1 17L8 14 23 15 17 19z', '#b8dcff'),
    studs: fl('M1 15L12 10 23 15 12 23z', '#6a98e8', '#4870c0') + ['8,9', '13,7', '18,10', '6,13', '12,11', '16,14', '11,15'].map(p => ci(...p.split(','), 2.400, '#c07818', '#f0a030', .8)).join(''),
    sew: fl('M2 4L6 3 11 5V21L6 18 2 21z', 'url(#sky)', '#3868b0') + fl('M22 4L18 3 13 5V21L18 18 22 21z', 'url(#sky)', '#3868b0') + ds('M12 4V22', R, 2),
    draft: fl('M2 14L10 8 22 18 12 23z', 'none', '#c06030') + fl('M7 6L13 2 19 5V14L13 17 6 14z', '#5c88e8', '#3a50b0') + fl('M7 6L13 2 19 5 13 8z', '#cce0ff', '#3a50b0'),
    gem: fl('M12 1L22 8 20 17 12 23 3 18 2 8z', '#c4dcfc', '#3050a8') + ln('M2 8L12 10 22 8M12 10V23M3 18L12 10 20 17M12 1V10', '#3050a8', 1),
    blend: fl('M2 9L12 4 22 6V16L12 22 2 20z', '#4070d8', '#4868c0') + fl('M2 9Q5 3 12 3L22 5 20 9Q14 8 12 14L2 13z', '#ffc850', '#c08828') + fl('M2 13L12 13V22L2 20z', '#88a8f0'),
    chamfer: bx(0, 0, 24, 24, 'none', '#c8ecf8') + fl('M2 12L12 14V22H2z', '#a8c8f0', '#888') + fl('M12 14L22 7V21L12 22z', '#88a8e0') + fl('M1 8L8 2 22 5 13 12z', '#ffe040', '#c07018') + ln('M1 9L13 13 23 5', R, 1),
    flange: fl('M15 2L21 1Q22 14 17 20L4 22 2 17Q14 16 15 2z', 'url(#gold)', '#d89838') + fl('M2 17Q14 16 15 2L12 9Q10 15 2 17z', '#e08030'),
    join: fl('M1 8L12 6V19L1 19z', 'url(#sky)', '#4878b0') + fl('M12 6L23 4V15L19 19H12z', '#f8a858', '#c06828') + ln('M1 8L7 4H23M12 8H19V19M19 8L23 4', '#c06828', 1),
    pocket: fl('M2 9L8 6V14H14V4L22 2V19L12 23 2 20z', '#4880d0', '#3860a8') + fl('M2 10L9 12V19L2 18zM14 6L18 8V19L10 21V14H14z', '#ffc048'),
    bubble: ln('M2 5L9 2 22 4V17L15 22 2 18zM2 5L15 8 22 4M15 8V22', '#d04050', .9) + fl('M3 13Q7 4 13 10Q20 6 20 14V18L12 22 3 18z', '#ffe45a', '#d0a830'),
    inter: fl('M10 6L20 2V16L11 22z', '#ffec70', '#c8a020') + ln('M2 7L9 4 14 6V18L9 22 2 19zM6 10L14 8 22 11V17L14 20 6 17z', '#c83040', 1),
    patch: fl('M5 13Q6 5 13 6L21 8V18L12 21 5 19z', '#6c90f0', '#3858b8') + fl('M5 13Q7 8 12 9V21L5 19z', '#c0d4ff') + ln('M1 18Q1 6 10 3L20 2 23 8M1 18L10 22', '#d04050', 1),
    split: fl('M1 2V18Q5 21 9 18V2z', 'url(#blue)', '#5868c0') + fl('M15 12V22Q19 24 23 22V12z', 'url(#blue)', '#5868c0') + `<ellipse cx="5" cy="2.500" rx="4" ry="1.500" fill="#dce6ff" stroke="#5868c0"/>` + fl('M12 3l6 3 1-2 2 6-6-1 2-1-5-3z', '#c84818'),
    trimbody: fl('M1 8L7 5H23V14L17 19H1z', 'url(#sky)', '#4878b0') + ln('M1 8H17V19M17 8L23 5', '#4878b0', 1) + ln('M9 19V8L13 4', R, 1.4),
    slab: fl('M1 13L14 6 23 11V15L10 22 1 17z', '#d4e2ff', '#557') + ln('M1 13L10 18 23 11M10 18V22', '#557', 1) + ln('M4 6L21 17', R, 1.3),
    slabs: slabAt(1, 1) + slabAt(6, 12) + fl('M14 7q6 0 6 4h2l-3 4-3-4h2q0-2-4-2z', '#e07820'),
    unite: bx(3, 10, 13, 13, K, '#28a888') + ci(17, 9, 6, K, '#28a888') + ln('M1 3H7M4 0V6', R, 1.600),
    subtract: bx(3, 10, 12, 12, K, '#28a888') + ci(17, 9, 6, K, '#dadada') + ln('M1 3H7', R, 1.600),
    intersect: bx(3, 10, 12, 12, K) + ci(16, 9, 6) + fl('M10 10H15V15Q11 14 10 10z', '#28a888', K) + ln('M1 1L5 5M5 1L1 5', R, 1.500),
    wrench: fl('M12 1H19L23 5V16H12z', '#f0f0ff', '#8888b8') + ln('M14 7H21M14 10H21M14 13H21', '#d06080', 1) + fl('M1 20L6 14Q5 10 9 9L9 12 12 13 13 10Q15 14 10 16L4 22z', '#ffd838', '#807010'),
    trimcurve: ln('M2 11H23M6 3Q16 3 20 11') + ds('M4 21Q16 22 20 13', '#999') + ln('M14 5L23 15', R),
    trimcross: ln('M1 12H22M12 2V22', '#555') + ln('M6 5L20 15', R),
    scurve: ln('M3 21Q10 22 12 12Q13 3 22 3') + ln('M11 4l6 6M8 15l6 6', R),
    bound: fl('M3 2H14L22 12V22H3z', 'none', N, 1.600) + ds('M5 6L15 15', '#555') + ln('M12 17h7M16 14l3 3-3 3', '#d06020'),
    extend: ln('M3 20Q14 20 15 9', K) + ln('M15 11V3M21 3V13M19 5l2-3 2 3M19 11l2 3 2-3', R, 1.3),
    offsetcurve: ln('M2 8Q8 2 12 5Q16 8 23 2', K, 1.8) + ln('M2 21Q12 13 22 20', R, 1.8) + fl('M10 8h3v4h2l-3 4-3-4h1z', '#e07030'),
    rulercube: fl('M2 2H8V17H23V23H2z', '#fff0a0', '#c89818') + ds('M6 4V18M9 20H22', '#a07010') + ln('M11 6H18V14H11zM14 3H21V11H14zM11 6L14 3M18 6L21 3M18 14L21 11M11 14L14 11', R, 1.200),

    // assemblies and curves
    layers: [3, 8, 13].map(y => fl(`M2 ${y + 3}L11 ${y} 22 ${y + 2} 13 ${y + 6}z`, '#d8ecd8', '#345')).join('') + bx(11, 9, 11, 13, '#668', '#fff', 1) + ln('M13 12h2M17 12h4M13 15h2M17 15h4M13 18h2M17 18h4', '#4050a8'),
    assign: gem(7, 16) + fl('M8 7L14 2 20 3 18 9 12 11z', '#f8d898', '#a08040') + fl('M17 1h6v6z', '#3848a8'),
    palette1: fl('M1 6Q3 0 10 3Q16 0 16 7Q22 9 18 13L10 14Q12 20 4 23Q8 17 6 13Q2 12 1 6z', '#ffe880', '#a88820') + gem(17, 12) + dots('#e8a0a0', '5,6') + dots('#80b0e8', '10,7'),
    pick: gem(9, 9, '#88a') + fl('M12 8V21L15 18 17 23 20 22 18 17H22z', '#fff', K, .9),
    add1: gem(9, 6) + gem(18, 17, '#a8b8e8') + fl('M2 13V22L8 17z', R),
    add2: gem(8, 6) + gem(17, 17, '#a8b8e8') + fl('M2 13V22L8 17z', R) + fl('M23 2V12L18 7z', '#18a030'),
    add3: gem(7, 6, '#a8b8e8') + gem(17, 17) + fl('M1 13V22L7 17z', '#18a030'),
    gridlines: ln('M1 7H23M7 2V22M17 2V22', '#a09090') + dots('#b88', '7,7', '17,7'),
    measure: ln('M3 21L20 4', R) + ln('M5 12l7 7M9 8l7 7M12 5l7 7', R, 1.4) + dots(N, '4,20', '19,4'),
    ruler: bx(1, 15, 22, 7, '#a89020', '#fff098', 1) + ds('M3 17H22', '#555', 3) + ln('M2 3V12M22 3V12M3 8H21M6 6L3 8l3 2M18 6l3 2-3 2', B),
    line: ln('M3 20L20 4') + dots(R, '3,20', '20,4'),
    arc: ln('M3 4Q20 4 21 19') + dots(R, '3,4', '15,8', '21,19'),
    arc3: ln('M3 4Q20 4 21 19') + dots(R, '3,4', '16,8', '21,19'),
    rect: bx(3, 5, 18, 13) + dots(R, '3,5', '21,18'),
    spline: ln('M2 13L6 5 16 17 21 8M6 9L12 11 16 14', '#555', 1.2) + dots('#888', '6,4', '2,14', '22,7', '15,20') + dots(R, '8,10', '16,14'),
    lettera: tx(3, 20, 24, 'A', '#000', 'Liberation Serif'),
    surfcurve: fl('M1 7Q8 0 23 3Q16 10 20 20Q12 20 7 23Q8 12 1 7z', '#b8dcf8', '#88b0d8') + ln('M4 14Q4 3 14 4Q21 5 18 15', K) + dots(R, '4,14', '7,6', '19,16'),
    offsetgray: fl('M2 10L9 2H15Q17 3 17 7Q23 9 22 15Q20 22 15 22H2z', 'none', K, 1.200) + fl('M6 12L10 7H13V11Q19 11 18 15Q16 19 13 19H6z', 'none', R, 1.400),
    bridge: fl('M1 10Q7 5 12 6L23 14 14 20Q10 12 1 10z', '#f8d8c8', '#a04828') + fl('M5 9Q10 7 14 8L21 13 16 17Q12 11 5 9z', '#b0d0f8', N) + ln('M8 11L16 11M14 9l3 2-2 3', R, 1.3),
    joincurve: ln('M3 3Q12 1 9 7Q6 11 12 11M23 5Q16 4 17 9M2 22Q1 16 9 19Q14 22 22 20') + fl('M12 9h4v5h3l-5 5-4-5h2z', '#f0a050', R, .8),
    joincurve2: ln('M3 4Q13 2 9 8Q5 12 12 12M23 5Q17 4 16 9M2 22Q3 14 12 19Q18 22 22 18') + fl('M12 10h2v4h3l-4 4-4-4h3z', '#e07020'),
    wrapcyl: fl('M3 3V21Q7 24 11 21V3z', 'url(#blue)', '#4050a8') + ln('M17 2Q25 10 17 21', R, 1.8) + ln('M12 12H19M17 9l3 3-3 3', '#d05010'),
    project: fl('M1 14L12 10 23 14 13 23z', '#c8e0f8', '#6890c0') + ln('M6 12Q14 14 16 21', '#d04010', 1.6) + ln('M5 2L20 1M13 2V13M11 10l2 3 2-3', N, 1.4),
    intersectsurf: fl('M2 12L10 6 23 12 14 20z', '#a8d0f8', '#6890c0') + fl('M10 2L17 5V23L10 18z', '#eee', '#889') + ln('M5 7L20 17', R, 1.600),
    planes: fl('M2 2L13 4V20L2 22z', '#fff', K) + fl('M12 3H23V22L12 18z', '#eef4ee', K) + ln('M6 10L10 8V14L6 16zM14 8H19V15H14z', '#b03050', 1.3),
    surf1: fl('M1 6Q12 8 22 3Q18 12 20 20Q12 18 5 16Z', 'url(#blue)', '#8898d8'),
    surf2: sheet('url(#blue)') + ln('M8 5Q11 11 11 18M15 5Q15 13 16 20', N, .8),
    surf3: sheet('url(#blue)') + ln('M8 5Q11 11 11 18M15 5Q15 13 16 20M3 9Q12 12 20 9M5 13Q12 17 20 14', N, .8),
    surf4: sheet('url(#blue)') + ln('M6 13V8Q12 5 16 9L17 15 11 16z', K, 1.2),
    netred: fl('M2 15L10 3 22 9 13 22z', '#fff8f0', '#c05838') + ln('M5 11L16 18M8 7L19 13M14 5L6 18M18 7L10 20', '#d0a090', 1) + dots(O, '2,20', '21,19', '8,2'),
    netblue: fl('M3 10L9 2 23 8 17 15z', '#eef', '#5868c8') + ln('M6 6L20 12M12 4L7 12M17 6L12 13', '#5868c8', .9) + dots(O, '3,15', '9,19', '15,21', '20,18'),
    flagsheet: fl('M2 8Q6 2 10 6Q15 11 22 7L20 16Q14 20 10 14Q6 11 2 16z', '#f4f4f4', '#444') + ds('M4 18Q12 24 18 17', N, 3),
    extendsheet: fl('M1 3L5 2 11 3V12L6 11 1 13z', '#88b8f0', '#4070b0') + fl('M10 11Q17 14 22 8V20Q16 25 10 21z', '#ffd060', '#c89838') + fl('M2 15l7 1-1 2-5 0z', '#d06820'),
    offsetsheet: fl('M1 14Q9 10 12 4L23 10Q15 14 12 21z', '#f4e0e8', '#a02840') + fl('M6 13Q11 11 13 7L18 11Q14 13 13 17z', '#b8c8f8', '#4848a8'),
    castle: fl('M1 11H7V8H17V12H23V18L12 23 1 17z', '#78a8e8', '#4878c0') + fl('M6 3L14 1V12L8 14zM15 3L20 2V12L15 13z', '#ffb848', '#c08828') + ln('M10 2V23', '#c04818'),
    bootsheet: fl('M9 1H20V14L14 23H1L9 15z', 'url(#gold)', '#e09828') + ln('M9 15L14 18 20 14', R, 1),
    foldsheet: fl('M3 10L10 5 20 9Q14 14 18 18L9 23 1 18Q8 14 3 10z', 'url(#sky)', '#78a0d0') + ln('M8 3L18 12M11 1L22 9', R, 1.2),
    sewback: fl('M2 6L6 4 11 7V22L6 19 2 22z', 'url(#sky)', '#3868b0') + fl('M22 6L18 4 13 7V22L18 19 22 22z', 'url(#sky)', '#3868b0') + ds('M12 8V23', R, 2) + ln('M7 8Q7 2 13 2Q18 3 17 8', '#000', 2) + fl('M3 6h8l-5 5z', '#000'),
    sewpin: fl('M2 8L6 6 11 9V20L6 17 2 20z', 'url(#sky)', '#3868b0') + fl('M22 6L18 5 13 9V18L18 15 22 17z', 'url(#sky)', '#3868b0') + ln('M12 3V24', '#666') + dots('#e06020', '12,3'),

    // selection bar
    gparts: fl('M2 6L8 4V20L2 18zM8 9H14V20H8z', G) + ci(15, 6, 4, G, '#aaa') + ci(19, 14, 3, G, '#aaa'),
    gfilter: fl('M2 3h7v3h3v3H7L2 6zM10 9h11l-4 6v7l-3-3v-5z', G),
    snapbox: bx(1, 1, 22, 22, R, '#e4dcdc') + ci(10, 9, 4, '#444') + ln('M10 2V16M3 9H17', '#444') + fl('M13 13H22L19 17V22L16 19z', '#f0d830'),
    gturn: ln('M3 8Q6 2 11 5Q14 9 9 12', G, 2) + ci(15, 16, 4, G) + ln('M15 9V23M8 16H22', G),
    ghook: fl('M3 5Q12 0 20 8V20H15V11L5 9z', G),
    marquee: `<rect x="2" y="4" width="20" height="16" fill="none" stroke="#666" stroke-width="1.500" stroke-dasharray="3 2"/>`,
    gcube: fl('M2 9L9 3 22 6 21 17 12 21 2 17z', '#8c8c8c') + ln('M2 9L14 11 22 6M14 11L12 21', '#777'),
    bluecube: fl('M2 6L10 9V22L2 18z', '#c0e0ff', '#48a') + fl('M10 9L22 6V18L10 22z', '#4878e0') + fl('M2 6L12 2 22 6 10 9z', '#e0f0ff', '#48a') + dots(R, '16,3'),
    gmove: ln('M12 2V22M2 12H22M9 5l3-3 3 3M9 19l3 3 3-3M5 9l-3 3 3 3M19 9l3 3-3 3', G, 1.6) + dots(G, '5,5', '19,19', '19,5', '5,19'),
    gmove2: ln('M9 1V16M2 9H16M6 4l3-3 3 3', G, 2) + fl('M11 14L17 11 23 14V20L17 23 11 20z', G),
    gline: ln('M3 21L19 5', G, 1.8) + dots(G, '19,5'),
    gseg: ln('M3 21L21 3', G, 1.8) + dots(G, '12,12'),
    gcurve: ln('M5 3Q13 2 12 11Q12 20 20 20', G, 1.800) + dots(G, '20,20'),
    gcross: ln('M3 15Q12 3 21 15M12 2V22', G, 1.800),
    gcircle: ci(12, 12, 9, G) + dots('#555', '12,12'),
    gquad: ci(12, 12, 8, G) + dots(G, '12,4', '12,20', '4,12', '20,12'),
    gplus: ln('M12 3V21M3 12H21', G, 2),
    gslash: ln('M4 21L20 4', G, 1.800) + dots(G, '8,17'),
    gface: fl('M3 9Q7 2 22 4Q18 12 21 18L8 22Q2 18 3 9z', G),
    ggrid: ln('M5 3L19 6V21L5 18zM5 8L19 11M5 13L19 16M9 4V19M14 5V20', '#777'),
    saveview: bx(7, 2, 15, 11, N, '#e8f0ff') + bx(2, 12, 11, 9, N, '#3858c8') + ln('M4 20h8', '#fff') + ds('M15 22H23', N),
    planes2: fl('M2 6L12 3V18L2 21z', '#eee', K) + ln('M5 9H11V15H5zM14 5H21V16H14zM17 8V13', R, 1.600),
    angle: ln('M3 3V22H22M3 12Q12 13 12 22M3 22L18 9', R, 2) + fl('M10 4L14 1 23 10 19 13z', '#fff098', '#a89020'),
    flag: bx(0, 0, 24, 24, 'none', '#7e98a2') + fl('M4 5L17 8 20 4 21 13 12 18 6 14z', '#a0a0a0') + ds('M6 8L13 10M15 10L20 8M8 13L17 14', '#555', 2.500) + ds('M8 10L15 13', '#666', 2),
    fullscreen: bx(5, 6, 14, 12, N, '#9cd0e8', 2) + ln('M1 7V2H7M17 2H23V7M23 17V22H17M7 22H1V17', '#555', 2),

    // resource bar
    assytree: fl('M2 6L6 3 10 5V11L6 13 2 11zM6 9L10 6 14 8V13L10 15 6 13z', '#ffd838', '#a88818') + ln('M6 16V24M6 20H12', N) + fl('M13 17L17 15 21 17V22L17 24 13 22z', '#ffd838', '#a88818') + ln('M15 13H23'),
    constraint: fl('M4 1L11 6 4 11zM20 1L13 6 20 11z', B) + ds('M12 0V24', K) + bx(2, 15, 8, 8, K, '#ffff20', 1) + fl('M14 15L22 23H14z', '#b01020', K),
    parttree: fl('M2 3V10Q6 13 11 10V3Q6 1 2 3z', '#d060d0', '#702070') + ln('M6 14V24M6 19H11', N) + ci(17, 19, 4.500, V) + ci(17, 19, 1.500, V) + ln('M14 10H23'),
    books: fl('M1 6L5 2 9 3 8 22H1z', '#f08828', '#a05010') + fl('M8 6L12 2 16 3 15 22H8z', '#38c848', '#187020') + fl('M15 6L19 2 23 3V18L20 22H15z', '#3890e8', '#1850a0') + ln('M2 10H7M9 10H14M16 10H20M2 18H7M9 18H14M16 18H20', '#fff', 1),
    web: ln('M9 2Q22 3 23 17M9 6Q18 7 18 17', '#4478c8', 2.800) + ci(9, 15, 7.500, '#2858a8', '#3888d8') + tx(6, 20, 14, 'i', '#fff', 'Liberation Serif'),
    page: fl('M4 1H15L21 7V23H4z', '#fff', '#3878b8', 1.500) + ci(13, 15, 5.500, '#2870b0', '#50b868') + ln('M9 18Q8 11 14 10', '#2868c8', 2.500),
    clock: ci(12, 12, 10.500, '#667', '#dde4ee', 2) + ci(12, 12, 8, 'none', '#fff') + ln('M12 5V13H17', K, 1.800) + ds('M12 4A8 8 0 1 0 12.100 4', '#888', 1),
    materials: fl('M2 5L7 2V19L2 22z', '#eee', '#555') + bx(8, 3, 14, 16, '#555', '#fff') + dots('#20a040', '12,11') + dots(R, '12,7') + dots(B, '12,15') + ln('M15 7h5M15 11h5M15 15h5', K, 1),
    spectrum: bx(2, 2, 8, 20, 'none', 'url(#heat)') + ln('M12 6L21 22', K, 3) + fl('M11 3l2 2 3-1-2 3 1 3-3-1-3 1 1-3z', '#fff'),
    wizard: fl('M4 3H9V20H4z', '#68a8e8', '#2868b8') + ln('M3 8H23L16 13H4M2 17H12', '#3878d0', 1.500) + ln('M12 6L21 22', K, 3) + fl('M11 3l2 2 3-1-2 3 1 3-3-1-3 1 1-3z', '#fff'),
    people: fl('M10 20Q10 12 17 11Q23 12 23 20z', '#38983c') + ci(17, 6, 4.500, '#a87018', '#f0c070') + fl('M1 24Q1 16 8 15Q14 16 14 24z', '#9050c8') + ci(8, 12, 4.500, '#684018', '#e8a878'),
    scene: fl('M2 5L7 2V19L2 22z', '#eee', '#555') + bx(8, 3, 14, 16, '#555', '#fff') + bx(10, 5, 10, 10, 'none', '#c82830') + fl('M12 5H18V9L15 13 12 10z', '#60a0f0') + fl('M11 15L15 12 19 15z', '#fff'),

    // left column
    link: `<g transform="rotate(-12 12 12)"><rect x="7" y="1" width="8" height="13" rx="4" fill="none" stroke="#98a010" stroke-width="3"/><rect x="7" y="1" width="8" height="13" rx="4" fill="none" stroke="#e0e840" stroke-width="1"/><rect x="10" y="10" width="8" height="13" rx="4" fill="none" stroke="#98a010" stroke-width="3"/><rect x="10" y="10" width="8" height="13" rx="4" fill="none" stroke="#e0e840" stroke-width="1"/></g>`,
    k1: ln('M3 20L21 4', V) + dots(R, '3,20', '21,4'),
    k2: ln('M10 13V2M10 13L22 7M8 3l2-2 2 2', G) + ln('M4 14L20 21', V) + ln('M10 13L21 17', R, 1.2) + dots(R, '4,14', '21,17'),
    k3: ln('M4 18L19 4', V) + ds('M8 22L23 8') + dots(R, '4,18'),
    k4: ln('M3 9L23 16', V) + ds('M16 1L9 22') + dots(R, '3,9'),
    k5: ln('M3 17L17 8', V) + ds('M18 7A5 5 0 1 0 18.100 7') + dots(R, '3,17'),
    k6: ln('M4 10L17 3', V) + ds('M18 3A5 5 0 1 0 18.100 3M6 11A5 5 0 1 0 6.100 11'),
    k7: ds('M2 12Q5 -2 11 9Q16 18 23 4') + ln('M9 17L15 11', V, 2) + ln('M5 13L11 8', R, 1.2) + dots(R, '9,18'),
    k8: ds('M1 22Q6 4 11 14Q16 24 23 12') + ln('M9 12L17 5', V, 2) + ln('M9 6L14 1', R, 1.2) + dots(R, '18,4'),
    k9: fl('M2 5L18 3V21L4 21z', 'url(#sky)', '#4878b0') + fl('M18 3L22 5V20L18 21z', '#777') + ln('M7 1V22M16 2V22M1 8H22M2 15H23', N, 1) + dots(R, '7,1', '1,9', '22,15', '7,22'),
    a1: ln('M4 6Q18 6 20 20', V) + dots(R, '4,6', '14,10', '20,20'),
    a2: ln('M6 7Q18 10 20 20', V) + ds('M5 2L11 10M16 15L23 21') + dots(R, '6,7', '20,21'),
    a3: ds('M2 3H23M2 21H23M20 1V24') + ln('M13 3Q20 4 20 12Q20 20 13 21', V),
    a4: ds('M2 4H23M20 2V24') + ln('M13 4Q19 6 20 12M12 14L19 7', V) + ln('M11 13L17 7', R),
    c1: ci(12, 12, 9, V) + dots(R, '12,3', '18,5', '21,12') + dots(V, '12,12'),
    c2: ci(11, 13, 9, V) + ds('M9 0L23 14') + dots(R, '8,4', '19,16') + dots(V, '11,13'),
    c3: ci(11, 12, 9, V) + ds('M1 3H24M1 21H24M20 1V23') + dots(V, '11,12'),
    c4: ci(11, 12, 9, V) + ds('M1 3H24M20 1V23') + ln('M11 12L17 6', R, 2),
    d1: ci(12, 12, 9, V) + dots(R, '12,12', '21,12'),
    d2: ci(12, 12, 9, V) + ln('M12 12L17 7', R, 2) + dots(R, '12,12', '17,7'),
    d3: ci(11, 13, 9, V) + ds('M9 0L23 14') + dots(R, '11,13'),

    // mould tools
    diamond: fl('M1 12L12 3 23 12 12 21z', '#fff', B) + fl('M5 12L12 6 19 12 12 18z', '#18e838', '#186828'),
    wbox: fl('M3 8L9 3H21V17L16 21H3z', '#fff', N, 1.200) + ln('M3 8H16V21M16 8L21 3', N, 1),
    splitbox: fl('M3 12L6 9H11V20H3zM13 12L16 9H21V17L18 20H13z', '#fff', '#889') + ln('M12 9V21', '#18a838') + fl('M4 4l4-2v4zM20 4l-4-2v4z', R) + ln('M7 4H10M14 4H17', R, 1),
    mold: fl('M2 9H9V12H15V9H22V22H2z', '#fff', B) + fl('M2 9Q2 2 6 2Q10 2 10 9zM14 9Q14 2 18 2Q22 2 22 9z', '#d01028') + ln('M12 3V22', R, 1),
    swatches: ['#d01010', '#ffe000', '#0000e0', '#10e020', '#10e0e0', '#fff', '#000', '#fff', '#2090e0', '#ff8000', '#00a000', '#a02090'].map((c, i) => bx(3 + i % 3 * 6, 3 + Math.floor(i / 3) * 4.5, 6, 4.5, 'none', c)).join(''),
    sheet: fl('M2 4Q4 6 7 3H17Q20 6 22 4V9Q19 12 22 15V20Q20 18 17 21H7Q4 18 2 20V15Q5 12 2 9z', '#fff', B) + ds('M12 4V20M3 12H21'),
    bline: ln('M3 5L21 18', N),
    target: ci(12, 12, 9, B, 'none', 1.2) + ds('M12 1V23M1 12H23'),
    lines3: ln('M2 4L20 17', R, 1.800) + ln('M10 2L23 12M1 9L17 22', B, 1),
    rectcross: bx(2, 4, 20, 16, B, '#fff') + ds('M12 4V20M2 12H22', R, 1.400),
    rainbow: fl('M2 5Q12 0 22 5Q12 8 2 5z', '#dfe8df', '#888') + ln('M2 10H22', R, 2) + ln('M2 13.500H22', '#222', 2) + ln('M2 17H22', '#18a040', 2) + ln('M2 20.500H22', B, 2),
    nbox: fl('M3 8L9 3H21V16L16 21H3z', '#fff', N) + ln('M16 8V21M3 8H16L21 3', N, 1) + ln('M6 19V11L12 18V10', R, 1.6),
    axis: ln('M8 3V13L21 20M8 13L19 6M8 13L3 17', R, 1.400) + dots(R, '8,3'),
    axisplane: fl('M1 11L14 3 23 14 10 22z', '#fff', N) + ln('M8 3V12L20 19M8 12L19 5', V, 1.400) + dots(V, '8,3', '19,5'),
    axisbox: fl('M2 8L7 3H22V16L18 21H2z', '#fff', '#60d8c0', 1.6) + ln('M8 4V13L20 20M8 13L19 7M8 13L3 18', R, 1.400),
    bigx: ln('M4 5L20 20M20 5L4 20', '#d81818', 4),
    folder: fl('M1 9H5L7 11H12V20H1z', '#f0c030', '#907010') + fl('M3 13H14L11 20H1z', '#ffe070', '#907010') + `<text x="12" y="16" font-size="12" fill="#444">组</text>`,
    broom: fl('M10 1H14V8H10z', '#28286c') + fl('M9 8H15L21 20 18 22H5L3 20z', '#d8a828', '#806010') + ln('M5 17Q12 14 19 17M9 10L7 21M12 9V21M15 10L17 21', '#a08020', 1),
    ten: fl('M1 15L5 11H15V19L11 23H1z', '#fff', N) + ln('M1 15H11V23M11 15L15 11', N, 1) + tx(8, 9, 9, '10') + ln('M2 9L6 3M17 10L21 4', R, 1),
    blobs: fl('M2 3H8L11 5V10H4L2 8z', '#f8e040', '#c8b030') + fl('M11 13H17L21 16V21H13L11 19z', '#b8d0f0', '#a0b8d8'),
    redbox: fl('M3 8L8 4H21V17L17 21H3z', '#f4e8e8', R) + ln('M3 8H16V21M16 8L21 4M7 12V17L20 17M7 4V16H3', R, 1),
    parl: ln('M4 14L14 5', R, 1.800) + ln('M9 21L20 10', K, 1.800) + dots(R, '4,14', '14,5'),
    seg: ln('M4 20L17 6', R, 1.800) + dots(B, '4,20', '18,5'),
    rotr: ln('M10 4Q20 4 20 13Q18 21 11 20Q4 18 4 12', R, 1.8) + fl('M11 1V8L6 4z', R) + bx(11, 11, 2, 2, 'none', B),
    axlock: ln('M5 8V17L14 23M5 17L11 12M3 10l2-3 2 3', V, 1.600) + bx(12, 8, 9, 6, V, '#e8d8f4') + ln('M14 8V3H20V6', V),
    four: quad('#fff', B, 1.200),
    fourb: quad('#6a3820', N, 1.200),
    moverect: ln('M7 18V6M5 8l2-3 2 3', V) + bx(11, 12, 9, 7, R),
    parl2: ln('M2 16L13 6', R, 1.800) + ln('M7 22L17 11', K, 2) + bx(15, 2, 7, 6, B, '#fff') + dots(R, '2,16'),
    seg2: ln('M3 21L15 9', R, 1.800) + bx(9, 2, 6, 5, B, '#fff') + dots(B, '3,21', '17,7'),
    rot2: ln('M10 4Q20 4 20 13Q18 21 11 20Q4 18 4 12', R, 1.800) + fl('M11 1V7L6 4z', R) + bx(8, 9, 7, 7, B, '#fff') + bx(11, 12, 2, 2, 'none', N),
    axlock2: ln('M5 5V17L12 20M5 17L11 11', R, 1.600) + bx(12, 7, 9, 6, N, '#d8d8ff') + ln('M14 7V2H20V5', N) + bx(14, 16, 8, 6, B, '#fff'),
    ringsq: ['12,4', '18,7', '20,12', '18,17', '12,20', '6,17', '4,12', '6,7'].map(p => { const [x, y] = p.split(','); return bx(x - 1.5, y - 1.5, 3, 3, B, '#fff', 1); }).join('') + ds('M12 8V16M8 12H16'),
    fourg: quad('#18d838', N, 1.200),
    moverect2: ln('M6 18V5M4 8l2-3 2 3', K) + bx(11, 12, 9, 7, B, '#fff'),
    rot3: ln('M12 4Q21 5 20 14Q18 22 10 20Q5 18 5 14', R, 1.800) + bx(2, 1, 7, 6, B, '#fff') + dots(B, '12,13') + fl('M9 4l5-3v6z', R),
    linkr: bx(2, 5, 9, 6, B, '#fff', 1.2) + ln('M11 11L18 17', '#40c040', 1) + bx(18, 16, 2, 2, 'none', R),
    screw: fl('M5 2H9V15H12L7 22 2 15H5z', '#78a8e0', '#5888c8') + fl('M14 4H22V20H14V15H17V9H14z', '#f0d058', '#a08818'),
    locring: `<ellipse cx="12" cy="12" rx="11" ry="9" fill="#fff" stroke="${B}" stroke-width="1.200"/>` + ci(12, 12, 5, '#a05070', '#d8b8b8', 1) + ds('M12 1V23M1 12H23', R, 1) + ci(4, 12, 1.500, B) + ci(20, 12, 1.500, B),
    tee: part('M3 4L6 2H18L21 4V10H16V21H8V10H3z'),
    seven: fl('M4 3H8V5L20 3V8L13 21H8L13 9H4z', '#fff', N, 1.200),
    seven2: bx(1, 14, 22, 6, 'none', '#a02060') + fl('M4 3H8V5L20 3V8L13 21H8L13 9H4z', '#fff', N, 1.200),
    m1: part('M8 3H16V8L18 12 17 22H7L6 12 8 8z') + ln('M6 8H18M6 13H18M6 18H18', '#187868', 1),
    m2: part('M8 2H16V7L14 10V15L16 22H8L10 15V10L8 7z'),
    m3: part('M7 2H17V17H15V22H9V17H7z'),
    m4: part('M6 2H18V21H14V14L12 12 10 14V21H6z'),
    m5: part('M5 3H19V10L15 13V21H9V13L5 10z') + ln('M9 4V12M15 4V12', B, 1),
    m6: part('M9 3H15V12H20Q22 14 20 17H4Q2 14 4 12H9z'),
    m7: part('M8 2H16V7L19 10V17L16 22H8L5 17V10L8 7z') + ln('M9 8Q12 14 15 8M9 20Q12 10 15 20', B, 1.200),
    m8: part('M4 5H20V19H4z') + ln('M9 2H15V22H9zM4 12H20', B, 1.200),
    m9: fl('M3 4H21V8H3zM4 8H20V14H4zM1 14H23V17H1zM4 17H8V21H4zM16 17H20V21H16z', '#fff', B, 1.200),
    m10: fl('M3 3H10V8H14V3H21V10H16V14H21V21H14V16H10V21H3V14H8V10H3z', '#fff', B, 1.200) + ln('M3 6H10M14 6H21M3 18H10M14 18H21', R, 1),
    m11: part('M8 2H16V5H20V20H16V22H8V20H4V5H8z') + ln('M8 6V19M16 6V19M4 8H20M4 17H20', '#a02060', 1.200),
    m12: `<rect x="6" y="2" width="12" height="20" rx="5" fill="#fff" stroke="${B}"/><rect x="9" y="5" width="6" height="14" rx="3" fill="#e0c8c8" stroke="${B}"/>` + ds('M12 1V23', R, 1),
    m13: fl('M14 3H20V20Q17 23 14 20z', '#fff', B) + fl('M3 10Q4 7 7 9L14 14 11 18 5 14z', '#f0d8e0', B) + ds('M17 1V23', R, 1),
    m14: part('M3 3H21L18 21H6z') + ln('M9 3V21M15 3V21', B, 1),
    m15: ln('M4 3L20 5 4 8 20 11 4 14 20 17 4 20 20 22', B, 1.200) + ds('M12 1V23', R, 1),
    m16: part('M8 2H16V6H20V12H17V20L14 22H10L7 20V12H4V6H8z') + ln('M4 9H20M8 14H16M8 17H16', B, 1),
    m17: ci(12, 10, 7.500, V, '#fff', 1.2) + ci(12, 10, 4, B, '#e8d0d0', 1) + fl('M10 17H14V23H10z', '#fff', B) + ds('M12 1V23M3 10H21', R, 1),
    m18: bx(6, 2, 13, 20, B, '#fff', 1.2) + ci(12, 8, 2.800, N, '#c0c8d8', 1) + ci(12, 16, 2.800, N, '#c0c8d8', 1),

    // sketch bar
    eye: fl('M2 15Q8 8 20 12Q16 20 6 18z', '#dce8c0', '#333') + ci(11, 15, 3, '#243', '#5a9030') + ln('M1 14Q8 6 20 11', K, 2.400) + ln('M14 12L21 4M17 4h4v4', N, 1.800),
    sketch: fl('M2 2L18 6V23L2 19z', '#fff', K) + ln('M5 6H10V10H5zM12 8H16V14H12zM5 13H9V18H5zM11 17H16', K, 1.300) + fl('M18 1l1 4 4-1-3 4 3 3-5-1-2 3-1-4-4-1 4-2z', '#f4f020', '#a8a010', .6),
    profile: ln('M3 2V13Q4 20 9 19Q12 18 12 12Q12 6 17 7Q21 8 21 18', K) + dots(R, '3,13', '12,13', '21,13'),
    circle: ci(12, 12, 10),
    filletg: ln('M1 3H12Q20 4 20 14V22', G, 1.2) + ln('M10 3Q20 3 20 13', '#c09090', 1),
    chamferg: ln('M1 3H10M20 14V23', G, 1.2) + ln('M10 3L20 14', '#c08888', 1.300),
    plus: ln('M12 3V21M3 12H21', K, 1.8),
    offsetg: fl('M2 10L9 2H15Q17 3 17 7Q23 9 22 15Q20 22 15 22H2z', 'none', G, 1.200) + fl('M6 12L10 7H13V11Q19 11 18 15Q16 19 13 19H6z', 'none', '#b89898', 1.300),
    quickg: ln('M2 4H22M4 2V20M4 20H16M2 2L22 22', '#555', 1.200),
    ext1: ln('M1 13H20M6 2L16 22', '#777') + fl('M12 10L18 6 21 10 16 15z', '#8c8c70'),
    ext2: ln('M1 13H14M6 2L14 22', '#777') + ln('M12 14L21 4', '#8c8c60', 3.500),
    ext3: ln('M1 12H22M12 2V23', '#999', 1.2) + ln('M5 4L19 15', '#b87078'),
    dimg: ln('M2 8V20M22 8V20M3 14H21M6 11l-3 3 3 3M18 11l3 3-3 3', '#666') + fl('M14 2L20 3 16 8H19L9 17 12 10H9z', '#808860'),
    perpg: ln('M1 14L9 4M6 14L14 4M12 19H23M18 8V19', '#999', 1.2),
    consg: bx(2, 5, 20, 17, '#668', 'none', 1.800) + ds('M12 1V23', '#555') + ln('M8 3V12M16 3V12', '#666') + fl('M5 7l4-3v6zM19 7l-4-3v6z', '#666'),
    playg: fl('M1 8V18L7 13z', '#5a9058') + ln('M8 12L16 3M14 13L22 4M11 22H21M16 13V22', '#777'),
    edit1: bx(3, 3, 10, 9, '#555') + bx(12, 14, 11, 9, '#555') + bx(2, 17, 7, 6, 'none', '#777') + ln('M13 16L22 6', '#808060', 3.500),
    edit2: ln('M11 3Q3 0 2 6Q3 11 9 9', '#707888', 2) + fl('M2 15L10 11 23 14V21L14 23 3 19z', '#70748a') + ln('M13 12L22 3', '#80886a', 3.500),
    edit3: ln('M11 3Q3 0 2 6Q3 11 9 9', '#707888', 2) + fl('M11 8H16V12L22 17 13 22 2 18 4 14 11 14z', '#60688a')
};

const svgFor = name => `<svg viewBox="0 0 24 24">${icons[name]}</svg>`;

// Expand a toolbar description into buttons, separators and carets
document.querySelectorAll('[data-icons]').forEach(group => {
    group.innerHTML = group.dataset.icons.split(' ').map(name => {
        if (name === '|') return '<span class="sep"></span>';
        if (name === 'v') return '<button class="caret" aria-label="more"></button>';
        if (name === '.') return '<button class="caret low" aria-label="options"></button>';
        if (name === '<') return '<button class="back" aria-label="options"></button>';
        if (name === '»') return '<button aria-label="more"><svg viewBox="0 0 10 14"><path d="M2 3l3 3 3-3M2 8l3 3 3-3" fill="none" stroke="#000" stroke-width="1.500"/></svg></button>';
        return `<button class="tool${name === 'link' ? ' on' : ''}" aria-label="${name}">${svgFor(name)}</button>`;
    }).join('');
});

document.querySelectorAll('[data-icon]').forEach(el => {
    if (el.tagName === 'svg') {
        el.setAttribute('viewBox', '0 0 24 24');
        el.innerHTML = icons[el.dataset.icon];
    } else {
        el.insertAdjacentHTML('afterbegin', svgFor(el.dataset.icon));
    }
});

// The first value is ready to be typed over
document.getElementById('diameter').select();
```
